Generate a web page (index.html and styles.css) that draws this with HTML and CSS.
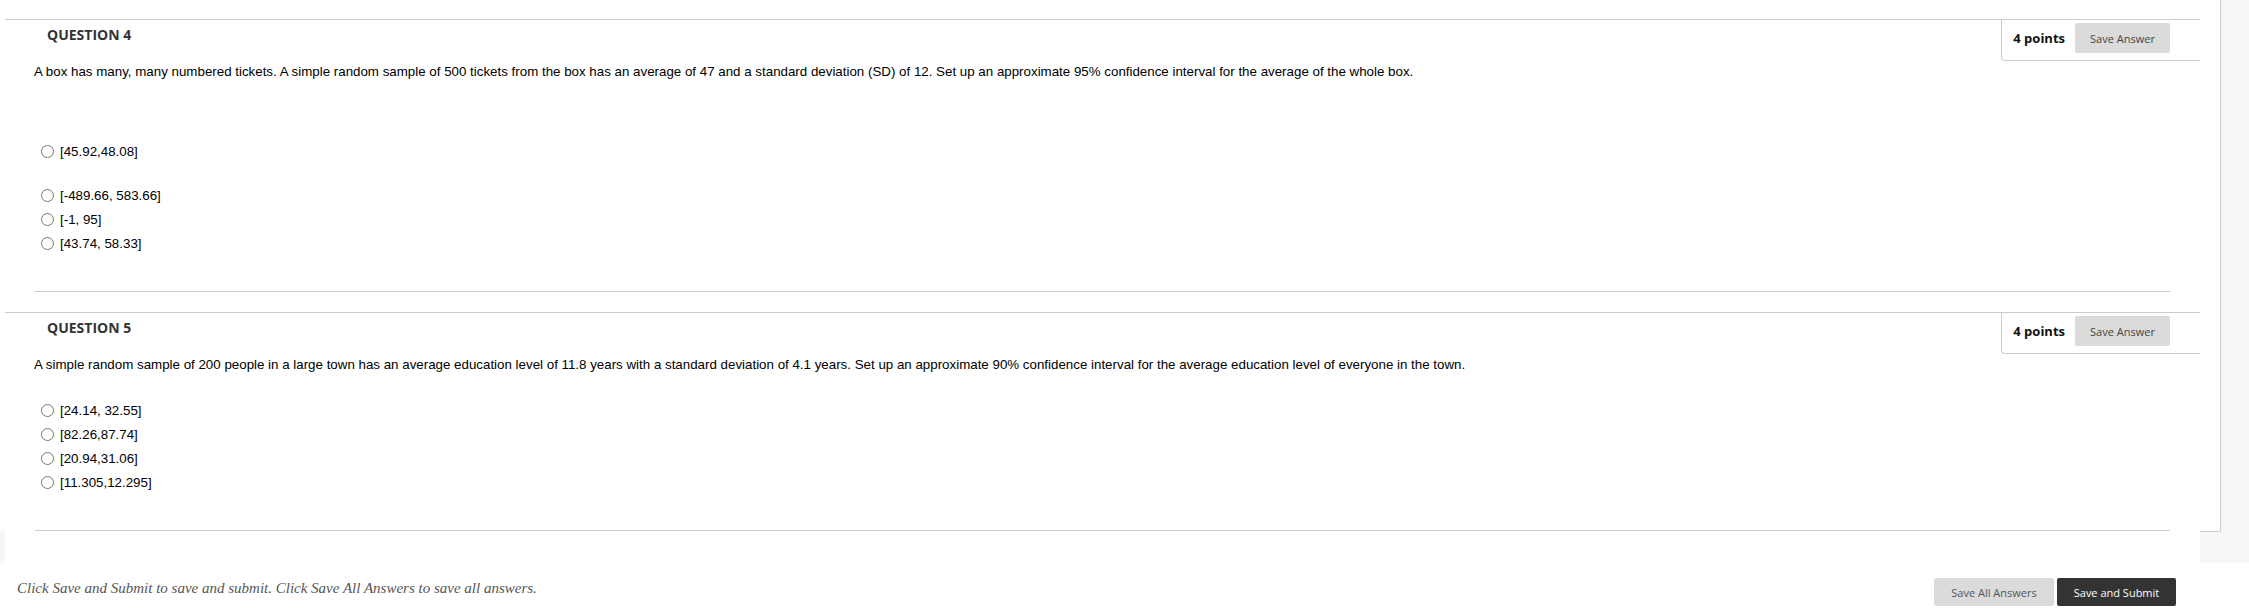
FILE: index.html
```html
<!DOCTYPE html>
<html lang="en">
<head>
<meta charset="utf-8">
<title>Test</title>
<link rel="stylesheet" href="styles.css">
</head>
<body>
<div class="main-row">
  <div class="content">
    <div class="question q4">
      <div class="q-header">
        <h3 class="q-title">QUESTION 4</h3>
        <div class="q-points">
          <span class="pts">4 points</span>
          <button class="btn-save" type="button">Save Answer</button>
        </div>
      </div>
      <p class="q-text">A box has many, many numbered tickets. A simple random sample of 500 tickets from the box has an average of 47 and a standard deviation (SD) of 12. Set up an approximate 95% confidence interval for the average of the whole box.</p>
      <ul class="answers answers-q4">
        <li class="answer spaced"><input type="radio" name="q4"><span>[45.92,48.08]</span></li>
        <li class="answer"><input type="radio" name="q4"><span>[-489.66, 583.66]</span></li>
        <li class="answer"><input type="radio" name="q4"><span>[-1, 95]</span></li>
        <li class="answer"><input type="radio" name="q4"><span>[43.74, 58.33]</span></li>
      </ul>
      <hr class="q-rule">
    </div>
    <div class="question q5">
      <div class="q-header">
        <h3 class="q-title">QUESTION 5</h3>
        <div class="q-points">
          <span class="pts">4 points</span>
          <button class="btn-save" type="button">Save Answer</button>
        </div>
      </div>
      <p class="q-text">A simple random sample of 200 people in a large town has an average education level of 11.8 years with a standard deviation of 4.1 years. Set up an approximate 90% confidence interval for the average education level of everyone in the town.</p>
      <ul class="answers">
        <li class="answer"><input type="radio" name="q5"><span>[24.14, 32.55]</span></li>
        <li class="answer"><input type="radio" name="q5"><span>[82.26,87.74]</span></li>
        <li class="answer"><input type="radio" name="q5"><span>[20.94,31.06]</span></li>
        <li class="answer"><input type="radio" name="q5"><span>[11.305,12.295]</span></li>
      </ul>
      <hr class="q-rule">
    </div>
  </div>
  <div class="side"></div>
</div>
<div class="band">
  <div class="band-left"></div>
  <div class="band-mid"></div>
  <div class="band-right"><div class="band-cap"></div></div>
</div>
<div class="footer">
  <p class="footer-note">Click Save and Submit to save and submit. Click Save All Answers to save all answers.</p>
  <div class="footer-btns">
    <button class="btn-all" type="button">Save All Answers</button>
    <button class="btn-submit" type="button">Save and Submit</button>
  </div>
</div>
</body>
</html>
```
FILE: styles.css
```css
* { box-sizing: border-box; }

body {
  margin: 0;
  background: #fff;
  color: #000;
  font-family: "Liberation Sans", Arial, sans-serif;
}

.main-row {
  display: flex;
}

.content {
  width: 2221px;
  padding: 19px 20px 0 5px;
  border-right: 1px solid #cccccc;
  background: #fff;
}

.side {
  flex: 1;
  background: #f6f6f6;
}

.question {
  border-top: 1px solid #cccccc;
}

.q4 {
  margin-bottom: 20px;
}

.q-header {
  display: flex;
  justify-content: space-between;
  align-items: flex-start;
}

.q-title {
  margin: 0;
  padding: 5px 0 0 42px;
  font: 700 14px/19px "Open Sans", sans-serif;
  color: #333;
}

.q-points {
  display: flex;
  align-items: center;
  gap: 10px;
  height: 41px;
  padding: 3px 30px 7px 11px;
  border-left: 1px solid #cccccc;
  border-bottom: 1px solid #cccccc;
  border-bottom-left-radius: 4px;
}

.pts {
  font: 700 13px/18px "Open Sans", sans-serif;
  color: #111;
}

.btn-save {
  width: 95px;
  height: 30px;
  padding: 0;
  border: 0;
  border-radius: 2px;
  background: #dbdbdb;
  color: #444;
  font: 400 11px "Open Sans", sans-serif;
}

.q-text {
  margin: 3px 0 0 29px;
  font-size: 13.333px;
  line-height: 15px;
}

.answers {
  list-style: none;
  margin: 26px 0 0;
  padding: 0 0 0 36px;
}

.answers-q4 {
  margin-top: 60px;
}

.answer {
  display: flex;
  align-items: center;
  gap: 6px;
  height: 24px;
  font-size: 13.333px;
}

.answer.spaced {
  margin-bottom: 20px;
}

.answer input {
  margin: 0;
  width: 13px;
  height: 13px;
}

.q-rule {
  margin: 36px 30px 0 30px;
  height: 0;
  border: 0;
  border-top: 1px solid #cccccc;
}

.band {
  display: flex;
  height: 32px;
}

.band-left {
  width: 5px;
  background: #f6f6f6;
}

.band-mid {
  width: 2195px;
  background: #fff;
}

.band-right {
  flex: 1;
  background: #f6f6f6;
}

.band-cap {
  width: 21px;
  height: 1px;
  background: #cccccc;
}

.footer {
  display: flex;
  justify-content: space-between;
  align-items: flex-start;
  height: 46px;
  padding: 15px 73px 0 17px;
}

.footer-note {
  margin: 0;
  font: italic 15px/20px "Liberation Serif", serif;
  color: #555;
}

.footer-btns {
  display: flex;
  gap: 3px;
}

.btn-all,
.btn-submit {
  height: 28px;
  padding: 0;
  border: 0;
  border-radius: 2px;
  font: 400 11px "Open Sans", sans-serif;
}

.btn-all {
  width: 120px;
  background: #dbdbdb;
  color: #555;
}

.btn-submit {
  width: 119px;
  background: #333;
  color: #fff;
}
```
